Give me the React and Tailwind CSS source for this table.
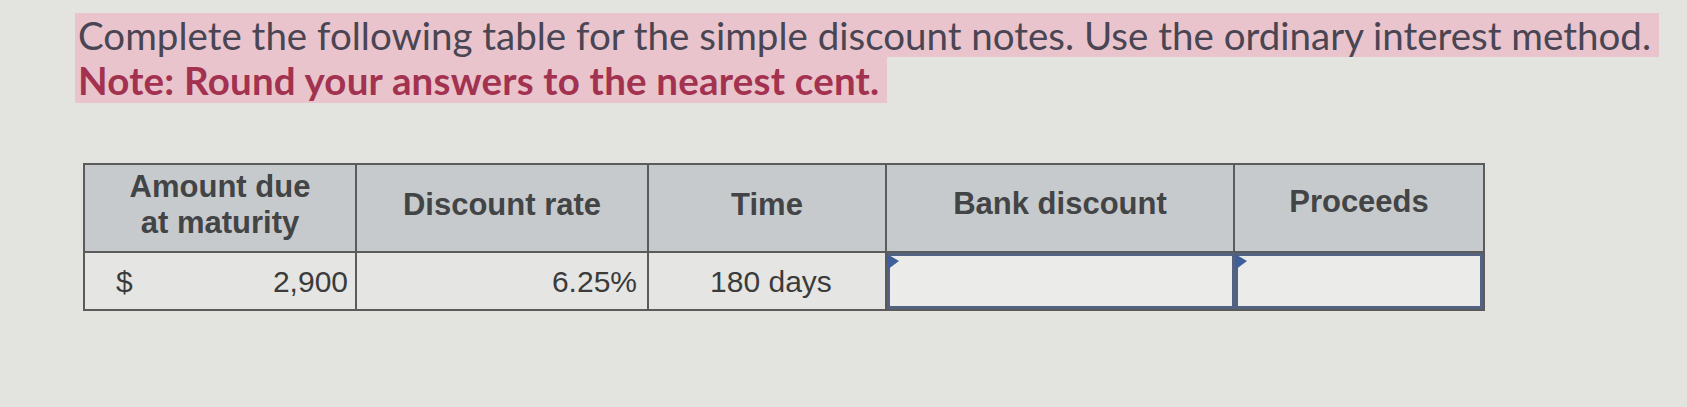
import React from 'react'

const cols = ['w-[272px]', 'w-[292px]', 'w-[238px]', 'w-[348px]', 'w-[248px]']

function Flag() {
  return (
    <svg className="absolute -left-[3px] -top-[2px]" width="13" height="17" viewBox="0 0 13 17">
      <path d="M0 0 L12 7 L0 16 Z" fill="#3f5f9c" />
    </svg>
  )
}

export default function App() {
  return (
    <div className="w-full h-[407px] bg-[#e3e4e0] pt-[13px] pl-[75px] overflow-hidden">
      {/* instructions */}
      <div className="font-['Lato','Noto_Sans',sans-serif] text-[38.5px]">
        <div className="w-fit bg-[#e9c4cc] h-[44px] pl-[3px] pr-[8px] leading-[44px] text-[#4a4553]">
          Complete the following table for the simple discount notes. Use the ordinary interest method.
        </div>
        <div className="w-fit bg-[#e9c4cc] h-[46px] pl-[3px] pr-[8px] leading-[46px] font-bold text-[#a2324f] tracking-[0.2px]">
          Note: Round your answers to the nearest cent.
        </div>
      </div>

      {/* table */}
      <div className="mt-[60px] ml-[8px] w-fit border-2 border-[#5b5b5b] font-['Liberation_Sans',Arial,sans-serif] text-[30px] text-[#3b3b3b]">
        <div className="flex h-[88px] bg-[#c7cacd] border-b-2 border-[#5b5b5b] font-bold text-[31px] text-[#424446]">
          <div className={`${cols[0]} flex items-center justify-center text-center leading-[36px] border-r-2 border-[#5b5b5b] pb-[6px]`}>
            <span>Amount due<br />at maturity</span>
          </div>
          <div className={`${cols[1]} flex items-center justify-center border-r-2 border-[#5b5b5b] pb-[6px]`}>
            Discount rate
          </div>
          <div className={`${cols[2]} flex items-center justify-center border-r-2 border-[#5b5b5b] pb-[6px]`}>
            Time
          </div>
          <div className={`${cols[3]} flex items-center justify-center border-r-2 border-[#5b5b5b] pb-[8px]`}>
            Bank discount
          </div>
          <div className={`${cols[4]} flex items-center justify-center pb-[12px]`}>
            Proceeds
          </div>
        </div>
        <div className="flex h-[56px] bg-[#e5e6e3]">
          <div className={`${cols[0]} flex items-center justify-between pl-[31px] pr-[7px] border-r-2 border-[#5b5b5b]`}>
            <span>$</span>
            <span>2,900</span>
          </div>
          <div className={`${cols[1]} flex items-center justify-end pr-[10px] border-r-2 border-[#5b5b5b]`}>
            6.25%
          </div>
          <div className={`${cols[2]} flex items-center justify-center pl-[8px] border-r-2 border-[#5b5b5b]`}>
            180 days
          </div>
          <div className={`${cols[3]} relative border-[3px] border-[#536280] bg-[#ebebe9]`}>
            <Flag />
          </div>
          <div className={`${cols[4]} relative border-[3px] border-[#536280] bg-[#ebebe9]`}>
            <Flag />
          </div>
        </div>
      </div>
    </div>
  )
}
